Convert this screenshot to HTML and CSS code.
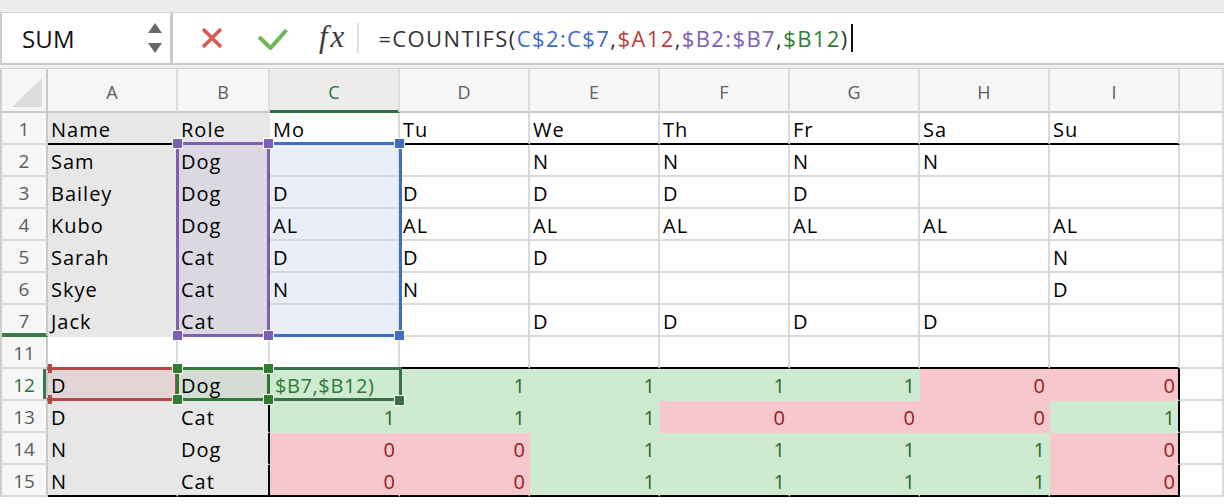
FILE: index.html
```html
<!DOCTYPE html>
<html>
<head>
<meta charset="utf-8">
<link rel="stylesheet" href="styles.css">
</head>
<body>
<div class="app">
  <div class="topstrip"></div>
  <div class="fbar">
    <div class="namebox">
      <span class="nb-text">SUM</span>
      <div class="spin"><span class="up"></span><span class="down"></span></div>
    </div>
    <svg class="ic-x" width="22" height="22" viewBox="0 0 22 22"><path d="M2 2 L20 20 M20 2 L2 20" stroke="#dc5853" stroke-width="3.6" fill="none"/></svg>
    <svg class="ic-ok" width="31" height="22" viewBox="0 0 31 22"><path d="M2 9 L13.5 20 L29.5 2" stroke="#6eb655" stroke-width="4" fill="none"/></svg>
    <span class="fx">fx</span>
    <span class="fsep"></span>
    <div class="formula">=COUNTIFS(<span class="rb">C$2:C$7</span>,<span class="rr">$A12</span>,<span class="rp">$B2:$B7</span>,<span class="rg">$B12</span>)<span class="caret"></span></div>
  </div>
  <div class="gapstrip"></div>

  <div class="sheet">
    <div class="corner"><svg width="44" height="42" viewBox="0 0 44 42"><polygon points="10,38 40,9 40,38" fill="#dcdcdc"/></svg></div>
    <div class="h">A</div><div class="h">B</div><div class="h hsel">C</div><div class="h">D</div><div class="h">E</div><div class="h">F</div><div class="h">G</div><div class="h">H</div><div class="h">I</div><div class="h"></div>

    <div class="rh">1</div>
    <div class="c g bb">Name</div><div class="c g bb">Role</div><div class="c bb">Mo</div><div class="c bb">Tu</div><div class="c bb">We</div><div class="c bb">Th</div><div class="c bb">Fr</div><div class="c bb">Sa</div><div class="c bb">Su</div><div class="c"></div>

    <div class="rh">2</div>
    <div class="c g">Sam</div><div class="c pu">Dog</div><div class="c bl"></div><div class="c"></div><div class="c">N</div><div class="c">N</div><div class="c">N</div><div class="c">N</div><div class="c"></div><div class="c"></div>

    <div class="rh">3</div>
    <div class="c g">Bailey</div><div class="c pu">Dog</div><div class="c bl">D</div><div class="c">D</div><div class="c">D</div><div class="c">D</div><div class="c">D</div><div class="c"></div><div class="c"></div><div class="c"></div>

    <div class="rh">4</div>
    <div class="c g">Kubo</div><div class="c pu">Dog</div><div class="c bl">AL</div><div class="c">AL</div><div class="c">AL</div><div class="c">AL</div><div class="c">AL</div><div class="c">AL</div><div class="c">AL</div><div class="c"></div>

    <div class="rh">5</div>
    <div class="c g">Sarah</div><div class="c pu">Cat</div><div class="c bl">D</div><div class="c">D</div><div class="c">D</div><div class="c"></div><div class="c"></div><div class="c"></div><div class="c">N</div><div class="c"></div>

    <div class="rh">6</div>
    <div class="c g">Skye</div><div class="c pu">Cat</div><div class="c bl">N</div><div class="c">N</div><div class="c"></div><div class="c"></div><div class="c"></div><div class="c"></div><div class="c">D</div><div class="c"></div>

    <div class="rh rh7">7</div>
    <div class="c g">Jack</div><div class="c pu">Cat</div><div class="c bl"></div><div class="c"></div><div class="c">D</div><div class="c">D</div><div class="c">D</div><div class="c">D</div><div class="c"></div><div class="c"></div>

    <div class="rh">11</div>
    <div class="c bb"></div><div class="c bb"></div><div class="c bb"></div><div class="c bb"></div><div class="c bb"></div><div class="c bb"></div><div class="c bb"></div><div class="c bb"></div><div class="c bb"></div><div class="c"></div>

    <div class="rh rhsel">12</div>
    <div class="c rt">D</div><div class="c gt br">Dog</div><div class="c ok act">$B7,$B12)</div><div class="c ok n">1</div><div class="c ok n">1</div><div class="c ok n">1</div><div class="c ok n">1</div><div class="c no n">0</div><div class="c no n br">0</div><div class="c"></div>

    <div class="rh">13</div>
    <div class="c g">D</div><div class="c g br">Cat</div><div class="c ok n">1</div><div class="c ok n">1</div><div class="c ok n">1</div><div class="c no n">0</div><div class="c no n">0</div><div class="c no n">0</div><div class="c ok n br">1</div><div class="c"></div>

    <div class="rh">14</div>
    <div class="c g">N</div><div class="c g br">Dog</div><div class="c no n">0</div><div class="c no n">0</div><div class="c ok n">1</div><div class="c ok n">1</div><div class="c ok n">1</div><div class="c ok n">1</div><div class="c no n br">0</div><div class="c"></div>

    <div class="rh">15</div>
    <div class="c g bb">N</div><div class="c g br bb">Cat</div><div class="c no n bb">0</div><div class="c no n bb">0</div><div class="c ok n bb">1</div><div class="c ok n bb">1</div><div class="c ok n bb">1</div><div class="c ok n bb">1</div><div class="c no n br bb">0</div><div class="c"></div>
  </div>

  <!-- range selection overlays -->
  <div class="box box-blue"></div>
  <div class="hd hd-blue" style="left:394px;top:138px"></div>
  <div class="hd hd-blue" style="left:394px;top:330px"></div>
  <div class="box box-purple"></div>
  <div class="hd hd-purple" style="left:172px;top:138px"></div>
  <div class="hd hd-purple" style="left:263px;top:138px"></div>
  <div class="hd hd-purple" style="left:172px;top:330px"></div>
  <div class="hd hd-purple" style="left:263px;top:330px"></div>

  <div class="box box-red"></div>
  <div class="redtick" style="top:364px"></div>
  <div class="redtick" style="top:395px"></div>
  <div class="box box-active"></div>
  <div class="hd hd-active" style="left:394px;top:395px"></div>
  <div class="box box-green"></div>
  <div class="hd hd-green" style="left:172px;top:363px"></div>
  <div class="hd hd-green" style="left:263px;top:363px"></div>
  <div class="hd hd-green" style="left:172px;top:394px"></div>
  <div class="hd hd-green" style="left:263px;top:394px"></div>
</div>
</body>
</html>
```
FILE: styles.css
```css
* { box-sizing: border-box; margin: 0; padding: 0; }
html, body { margin: 0; background: #fff; }
body { font-family: "Open Sans", "Noto Sans", sans-serif; width: 1224px; height: 504px; overflow: hidden; }

.app { position: relative; width: 1224px; height: 504px; overflow: hidden; }

/* ---------- formula bar ---------- */
.topstrip { height: 13px; background: #ececec; border-bottom: 1px solid #cfcfcf; }
.fbar { height: 52px; display: flex; align-items: center; background: #fff; border-bottom: 2px solid #c9c9c9; }
.namebox {
  width: 173px; height: 100%;
  display: flex; align-items: center;
  border-left: 2px solid #cbcbcb; border-right: 3px solid #c9c9c9;
  padding-left: 20px;
}
.nb-text { font-size: 24px; color: #111; letter-spacing: 0.2px; }
.spin { margin-left: auto; margin-right: 8px; display: flex; flex-direction: column; gap: 10px; }
.spin span { width: 0; height: 0; border-left: 7.5px solid transparent; border-right: 7.5px solid transparent; }
.spin .up { border-bottom: 10px solid #6a6a6a; }
.spin .down { border-top: 10px solid #6a6a6a; }

.ic-x { margin-left: 28px; }
.ic-ok { margin-left: 34px; margin-top: 1px; }
.fx {
  margin-left: 31px;
  font-family: "Liberation Serif", "DejaVu Serif", serif;
  font-style: italic; font-size: 31px; letter-spacing: 3px;
  color: #3a3a3a; line-height: 1;
  margin-top: -4px;
}
.fsep { width: 2px; height: 30px; background: #e0e0e0; margin-left: 10px; }
.formula {
  margin-left: 19px;
  font-size: 22px; letter-spacing: 1.4px;
  color: #333; white-space: nowrap;
  display: flex; align-items: center;
}
.rb { color: #3c6cc6; }
.rr { color: #b93d3d; }
.rp { color: #7b5db8; }
.rg { color: #2e7d32; }
.caret { display: inline-block; width: 2px; height: 28px; background: #111; margin-left: 2px; }

.gapstrip { height: 4px; background: #f1f1f1; border-bottom: 1px solid #cdcdcd; }

/* ---------- sheet grid ---------- */
.sheet {
  display: grid;
  grid-template-columns: 46px 130px 92px 130px repeat(6, 130px) 44px;
  grid-template-rows: 44px repeat(12, 32px);
  border-left: 2px solid #cfcfcf;
}
.corner { background: #f6f6f6; border-right: 2px solid #c8c8c8; border-bottom: 2px solid #c8c8c8; }
.corner svg { display: block; }

.h {
  display: flex; align-items: center; justify-content: center;
  padding-top: 4px;
  font-size: 18px; color: #5c5c5c;
  background: #f6f6f6;
  border-right: 2px solid #dcdcdc; border-bottom: 2px solid #c8c8c8;
}
.hsel { color: #2d6e42; background: #ececec; border-bottom-color: #2d6e42; box-shadow: inset 0 -1px 0 #2d6e42; }

.rh {
  display: flex; align-items: flex-end; justify-content: center;
  font-size: 19px; line-height: 27px; color: #5c5c5c;
  background: #f6f6f6;
  border-right: 2px solid #c8c8c8; border-bottom: 2px solid #dadada;
}
.rh7 { border-bottom-color: #3a7a4a; box-shadow: inset 0 -2px 0 #3a7a4a; }
.rhsel { color: #2d6e42; box-shadow: inset -3px 0 0 #3a7a4a; }

.c {
  display: flex; align-items: flex-end;
  padding: 0 3px 0 3px;
  font-size: 20px; line-height: 27px; letter-spacing: 1px;
  color: #000; white-space: nowrap; overflow: hidden;
  border-right: 2px solid #dadada; border-bottom: 2px solid #dadada;
}
.c.n { justify-content: flex-end; letter-spacing: 0; padding-right: 3px; }

.g  { background: #e7e7e7; border-color: #e7e7e7; }
.pu { background: #dcd8e2; border-color: #dcd8e2; }
.bl { background: #eaeef8; border-bottom-color: #d2d6de; }
.rt { background: #e3d5d6; border-color: #e3d5d6; }
.gt { background: #d4dbd4; border-color: #d4dbd4; }
.ok { background: #ceebd2; border-color: #ceebd2; color: #2a6a21; }
.no { background: #f6c8cd; border-color: #f6c8cd; color: #9a1b1b; }
.act { color: #2f7a33; padding-left: 5px; letter-spacing: 0.6px; }

.bb { border-bottom-color: #000; }
.br { border-right-color: #000; }

/* ---------- selection overlays ---------- */
.box { position: absolute; border: 3px solid; }
.box-blue   { left: 267px; top: 142px; width: 135px; height: 195px; border-color: #3f6ec6; }
.box-purple { left: 176px; top: 142px; width: 94px;  height: 195px; border-color: #7e5fb6; }
.box-red    { left: 47px;  top: 367px; width: 131px; height: 34px;  border-color: #b84848; border-left: 0; }
.box-green  { left: 176px; top: 367px; width: 94px;  height: 34px;  border-color: #2f7b31; }
.box-active { left: 267px; top: 367px; width: 135px; height: 34px;  border-color: #3a6e48; }

.hd { position: absolute; width: 11px; height: 11px; border: 1px solid #fff; }
.hd-blue   { background: #3f6ec6; }
.hd-purple { background: #7e5fb6; }
.hd-green  { background: #2f7b31; }
.hd-active { background: #3a6e48; }
.redtick { position: absolute; left: 48px; width: 4px; height: 9px; background: #b84848; }
```
